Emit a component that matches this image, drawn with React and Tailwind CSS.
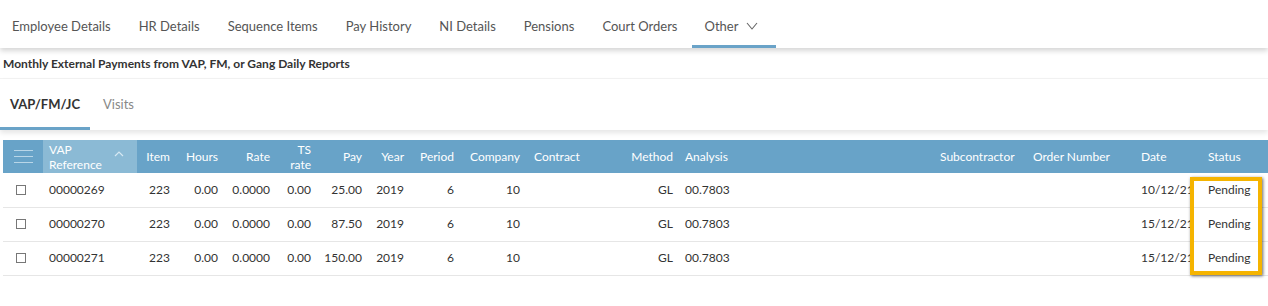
import React from "react";

const navTabs = [
  "Employee Details",
  "HR Details",
  "Sequence Items",
  "Pay History",
  "NI Details",
  "Pensions",
  "Court Orders",
];

const cols = [
  { key: "sel", w: 40 },
  { key: "ref", w: 94, label: ["VAP", "Reference"], align: "left" },
  { key: "item", w: 39, label: ["Item"], align: "right" },
  { key: "hours", w: 48, label: ["Hours"], align: "right" },
  { key: "rate", w: 52, label: ["Rate"], align: "right" },
  { key: "ts", w: 41, label: ["TS", "rate"], align: "center" },
  { key: "pay", w: 51, label: ["Pay"], align: "right" },
  { key: "year", w: 42, label: ["Year"], align: "right" },
  { key: "period", w: 50, label: ["Period"], align: "right" },
  { key: "company", w: 66, label: ["Company"], align: "right" },
  { key: "contract", w: 96, label: ["Contract"], align: "left" },
  { key: "method", w: 57, label: ["Method"], align: "right" },
  { key: "analysis", w: 255, label: ["Analysis"], align: "left" },
  { key: "sub", w: 93, label: ["Subcontractor"], align: "left" },
  { key: "order", w: 108, label: ["Order Number"], align: "left" },
  { key: "date", w: 67, label: ["Date"], align: "left" },
  { key: "status", w: 66, label: ["Status"], align: "left" },
];

const rows = [
  { ref: "00000269", item: "223", hours: "0.00", rate: "0.0000", ts: "0.00", pay: "25.00", year: "2019", period: "6", company: "10", contract: "", method: "GL", analysis: "00.7803", sub: "", order: "", date: "10/12/21", status: "Pending" },
  { ref: "00000270", item: "223", hours: "0.00", rate: "0.0000", ts: "0.00", pay: "87.50", year: "2019", period: "6", company: "10", contract: "", method: "GL", analysis: "00.7803", sub: "", order: "", date: "15/12/21", status: "Pending" },
  { ref: "00000271", item: "223", hours: "0.00", rate: "0.0000", ts: "0.00", pay: "150.00", year: "2019", period: "6", company: "10", contract: "", method: "GL", analysis: "00.7803", sub: "", order: "", date: "15/12/21", status: "Pending" },
];

const alignCls = {
  left: "text-left",
  right: "text-right",
  center: "text-right",
};

export default function App() {
  return (
    <div className="relative w-[1268px] h-[306px] overflow-hidden bg-white font-['Lato','Noto_Sans',sans-serif] text-[#333]">
      {/* Top navigation */}
      <nav className="relative z-20 h-[48px] flex items-stretch bg-white shadow-[0_3px_5px_rgba(0,0,0,0.16)]">
        <div className="flex items-stretch -ml-[2px]">
          {navTabs.map((t) => (
            <div key={t} className="px-[14px] pt-[5px] flex items-center text-[13px] text-[#555]">
              {t}
            </div>
          ))}
          <div className="pl-[13px] pr-[18px] pt-[8px] flex items-center text-[13px] text-[#555] border-b-[3px] border-[#6aa3c8]">
            <span>Other</span>
            <svg className="ml-[8px] mb-[2px]" width="12" height="8" viewBox="0 0 12 8" fill="none">
              <path d="M1 1 L6 7 L11 1" stroke="#666" strokeWidth="1.1" />
            </svg>
          </div>
        </div>
      </nav>

      {/* Title */}
      <div className="h-[31px] px-[3px] pt-[1px] flex items-center text-[12px] font-bold text-[#333] border-b border-[#f3f3f3]">
        Monthly External Payments from VAP, FM, or Gang Daily Reports
      </div>

      {/* Sub tabs */}
      <div className="relative z-10 h-[51px] flex items-stretch bg-white shadow-[0_3px_5px_rgba(0,0,0,0.1)]">
        <div className="px-[10px] pt-[3px] flex items-center text-[13px] font-bold text-[#333] border-b-[3px] border-[#6aa3c8]">
          VAP/FM/JC
        </div>
        <div className="ml-[3px] px-[10px] flex items-center text-[13px] text-[#888]">
          Visits
        </div>
      </div>

      {/* Table */}
      <div className="mt-[10px] ml-[3px]">
        <table className="table-fixed border-collapse w-[1265px] text-[12px]">
          <colgroup>
            {cols.map((c) => (
              <col key={c.key} style={{ width: c.w }} />
            ))}
          </colgroup>
          <thead>
            <tr className="h-[33px] bg-[#68a3c8] text-white">
              <th className="p-0 align-middle">
                <div className="flex flex-col gap-[4.5px] pl-[11px]">
                  <span className="block w-[19px] h-[1.5px] bg-[#b9d6e8]" />
                  <span className="block w-[19px] h-[1.5px] bg-[#b9d6e8]" />
                  <span className="block w-[19px] h-[1.5px] bg-[#b9d6e8]" />
                </div>
              </th>
              {cols.slice(1).map((c) => (
                <th
                  key={c.key}
                  className={`font-normal leading-[15px] px-[6px] align-middle ${alignCls[c.align]} ${c.key === "ref" ? "bg-[#8bbad5]" : ""} ${c.key === "contract" ? "pl-[8px]" : ""}`}
                >
                  {c.key === "ref" ? (
                    <div className="flex items-center justify-between">
                      <div>
                        <div>VAP</div>
                        <div>Reference</div>
                      </div>
                      <svg className="mr-[7px] mb-[6px]" width="10" height="6" viewBox="0 0 10 6" fill="none">
                        <path d="M1 5 L5 1 L9 5" stroke="#d6e8f2" strokeWidth="1.2" />
                      </svg>
                    </div>
                  ) : (
                    c.label.map((l) => <div key={l}>{l}</div>)
                  )}
                </th>
              ))}
            </tr>
          </thead>
          <tbody>
            {rows.map((r) => (
              <tr key={r.ref} className="h-[34px] border-b border-[#e6e6e6]">
                <td className="p-0 align-middle">
                  <div className="ml-[13px] w-[10px] h-[10px] border border-[#777] bg-white" />
                </td>
                {cols.slice(1).map((c) => (
                  <td
                    key={c.key}
                    className={`px-[6px] align-middle whitespace-nowrap ${c.align === "left" ? "text-left" : "text-right"}`}
                  >
                    {r[c.key]}
                  </td>
                ))}
              </tr>
            ))}
          </tbody>
        </table>
      </div>

      {/* Highlight annotation */}
      <div className="absolute left-[1190px] top-[177px] w-[72px] h-[98px] border-[4px] border-[#f5b400] shadow-[1px_1px_3px_rgba(0,0,0,0.6)] pointer-events-none" />
    </div>
  );
}
